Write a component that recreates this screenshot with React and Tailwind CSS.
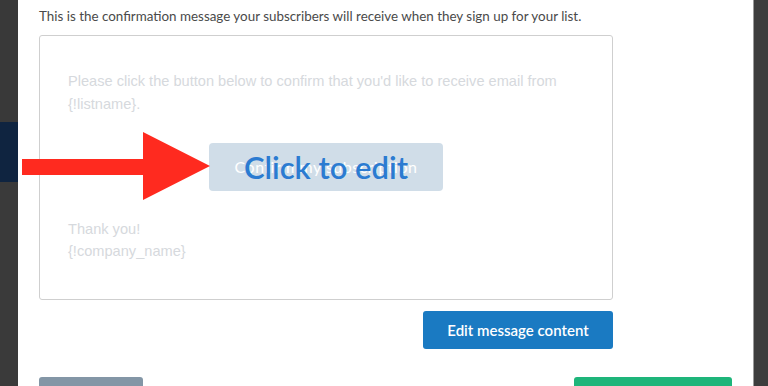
import React from "react";

export default function App() {
  return (
    <div className="w-full h-[386px] overflow-hidden flex bg-[#3b3b3b] relative">
      {/* left backdrop strip */}
      <div className="w-[18px] shrink-0 flex flex-col">
        <div className="h-[122px] bg-[#393939]" />
        <div className="h-[60px] bg-[#0f2440]" />
        <div className="flex-1 bg-[#3a3a3a]" />
      </div>

      {/* modal */}
      <div className="flex-1 bg-white pl-[21px] pr-[21px] pt-[6px] flex flex-col">
        <p className="text-[13.4px] leading-[20px] text-[#4a4a4a] shrink-0" style={{ fontFamily: "Lato, 'Open Sans', sans-serif" }}>
          This is the confirmation message your subscribers will receive when they sign up for your list.
        </p>

        <div
          className="mt-[9px] w-[574px] h-[265px] shrink-0 border-[1.5px] border-[#cfcfcf] rounded-[3px] pt-[34px] pl-[28px] flex flex-col"
          style={{ fontFamily: "'Liberation Sans', Arial, sans-serif" }}
        >
          <p className="text-[14.6px] leading-[23px] text-[#d6d9dd]">
            Please click the button below to confirm that you'd like to receive email from
            <br />
            {"{!listname}."}
          </p>

          <div className="mt-[27px] ml-[141px] w-[234px] h-[48px] shrink-0 rounded-[4px] bg-[#d0dde8] relative flex items-center justify-center">
            <span className="text-[16px] text-white tracking-[0.5px]" style={{ fontFamily: "Lato, sans-serif" }}>
              Confirm my subscription
            </span>
            <span
              className="absolute inset-0 flex items-center justify-center text-[31px] font-semibold text-[#2b7bd1]"
              style={{ fontFamily: "Lato, sans-serif" }}
            >
              Click to edit
            </span>
          </div>

          <p className="mt-[27px] text-[14.6px] leading-[22px] text-[#d6d9dd]">
            Thank you!
            <br />
            {"{!company_name}"}
          </p>
        </div>

        <div className="w-[574px] flex justify-end mt-[11px] shrink-0">
          <button
            className="w-[190px] h-[38px] rounded-[3px] bg-[#1a7ac2] text-white text-[15px] font-semibold"
            style={{ fontFamily: "Lato, sans-serif" }}
          >
            Edit message content
          </button>
        </div>

        <div className="mt-[28px] flex justify-between shrink-0">
          <div className="w-[104px] h-[30px] rounded-t-[3px] bg-[#8396a6]" />
          <div className="w-[158px] h-[30px] rounded-t-[3px] bg-[#1eb57a]" />
        </div>
      </div>

      {/* right backdrop strip */}
      <div className="w-[15px] shrink-0 bg-[#3d3d3d] border-l border-[#9a9a9a]" />

      {/* annotation arrow */}
      <svg className="absolute left-[22px] top-[132px]" width="190" height="70" viewBox="0 0 190 70">
        <polygon points="0,27 121,27 121,0 188,34 121,68 121,43 0,43" fill="#ff2a1f" />
      </svg>
    </div>
  );
}
